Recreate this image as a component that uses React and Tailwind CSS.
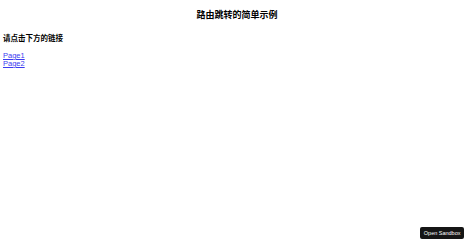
import React from "react";

const links = [
  { id: 1, link: "#", name: "Page1" },
  { id: 2, link: "#", name: "Page2" },
];

function App() {
  return (
    <div className="min-h-[248px] bg-white font-['Noto_Sans_CJK_SC','Liberation_Sans',sans-serif] text-black">
      <h1 className="pt-[10px] text-center text-[9px] font-bold leading-[10px]">路由跳转的简单示例</h1>
      <div className="px-[3px] pt-[13px]">
        <h2 className="text-[7.5px] font-bold leading-[9px]">请点击下方的链接</h2>
        <nav className="flex flex-col pt-[10px] font-['Liberation_Sans',sans-serif] text-[7.5px] leading-[8px]">
          {links.map((l) => (
            <a key={l.id} href={l.link} className="w-fit text-[#3b3bf0] underline">
              {l.name}
            </a>
          ))}
        </nav>
      </div>
      <button className="fixed bottom-[9px] right-[10px] rounded-[2px] bg-[#151515] px-[3.5px] py-[3px] font-['Liberation_Sans',sans-serif] text-[5.5px] leading-[6px] text-white">
        Open Sandbox
      </button>
    </div>
  );
}

export default App;
